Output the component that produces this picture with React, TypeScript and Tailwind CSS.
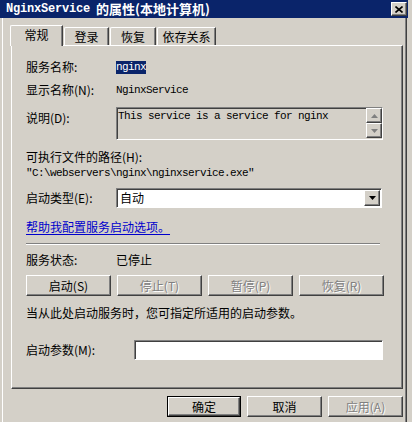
import React from 'react';

const raised =
  'border border-t-white border-l-white border-r-[#404040] border-b-[#404040] shadow-[inset_-1px_-1px_0_#808080]';
const sunken =
  'border border-t-[#808080] border-l-[#808080] border-r-white border-b-white shadow-[inset_1px_1px_0_#404040]';
const mono = "font-['Liberation_Mono',monospace] text-[11px] tracking-[-0.6px]";
const disabled = 'text-[#808080] [text-shadow:1px_1px_0_#fff]';

function Tab({ label, active, width }: { label: string; active?: boolean; width: string }) {
  return (
    <div
      className={`${width} flex items-center justify-center border-t border-l border-t-white border-l-white border-r border-r-[#404040] shadow-[inset_-1px_0_0_#808080] rounded-tl-[2px] bg-[#d4d0c8] ${
        active ? 'h-[21px] -mb-px pb-[2px] relative z-10' : 'h-[18px] ml-px'
      }`}
    >
      {label}
    </div>
  );
}

function Button({ children, off, className = '' }: { children: React.ReactNode; off?: boolean; className?: string }) {
  return (
    <div className={`h-[21px] flex items-center justify-center ${raised} ${off ? disabled : ''} ${className}`}>
      {children}
    </div>
  );
}

function Triangle({ down, color }: { down?: boolean; color: string }) {
  return (
    <svg width="7" height="4" viewBox="0 0 7 4">
      <path d={down ? 'M0 0H7L3.5 4Z' : 'M0 4H7L3.5 0Z'} fill={color} />
    </svg>
  );
}

export default function App() {
  return (
    <div className="w-[412px] h-[422px] bg-[#d4d0c8] overflow-hidden text-[12px] leading-[16px] text-black font-['Noto_Sans_CJK_SC',sans-serif]">
      {/* title bar */}
      <div className="w-[408px] h-[18px] bg-[#0a246a] flex items-center pl-[6px] pr-[1px] text-white font-bold">
        <span className="font-['Liberation_Mono',monospace] text-[12px] tracking-[-0.2px]">NginxService</span>
        <span className="ml-[6px] text-[13px]">的属性(本地计算机)</span>
        <div className={`ml-auto w-[16px] h-[14px] bg-[#d4d0c8] flex items-center justify-center ${raised}`}>
          <svg width="8" height="7" viewBox="0 0 8 7">
            <path d="M0.5 0.5L7.5 6.5M7.5 0.5L0.5 6.5" stroke="#000" strokeWidth="1.6" />
          </svg>
        </div>
      </div>

      {/* window body */}
      <div className="ml-[2px] w-[405px] h-[404px] border-l border-l-white border-r border-r-[#404040] shadow-[inset_-1px_0_0_#808080]">
        <div className="flex items-end h-[27px] pl-[7px]">
          <Tab label="常规" active width="w-[53px]" />
          <Tab label="登录" width="w-[45px]" />
          <Tab label="恢复" width="w-[46px]" />
          <Tab label="依存关系" width="w-[59px]" />
        </div>

        <div className="ml-[8px] w-[392px] h-[344px] border-t border-l border-t-white border-l-white border-r border-b border-r-[#404040] border-b-[#404040] shadow-[inset_-1px_-1px_0_#808080] pl-[14px] flex flex-col">
          <div className="mt-[13px] h-[16px] flex items-center">
            <span className="w-[90px]">服务名称:</span>
            <span className={`${mono} bg-[#0a246a] text-white h-[13px] leading-[13px]`}>nginx</span>
          </div>
          <div className="mt-[7px] h-[16px] flex items-center">
            <span className="w-[90px]">显示名称(N):</span>
            <span className={mono}>NginxService</span>
          </div>
          <div className="mt-[9px] h-[33px] flex items-start">
            <span className="w-[90px] pt-[3px]">说明(D):</span>
            <div className={`w-[267px] h-[33px] flex ${sunken}`}>
              <div className={`flex-1 pl-[1px] pt-[1px] leading-[14px] ${mono}`}>This service is a service for nginx</div>
              <div className="w-[16px] flex flex-col">
                <div className={`h-[15px] flex items-center justify-center ${raised}`}>
                  <Triangle color="#808080" />
                </div>
                <div className={`h-[15px] flex items-center justify-center ${raised}`}>
                  <Triangle down color="#808080" />
                </div>
              </div>
            </div>
          </div>
          <div className="mt-[9px] h-[16px] flex items-center">可执行文件的路径(H):</div>
          <div className={`h-[16px] flex items-center ${mono}`}>"C:\webservers\nginx\nginxservice.exe"</div>
          <div className="mt-[7px] h-[20px] flex items-center">
            <span className="w-[90px]">启动类型(E):</span>
            <div className={`w-[266px] h-[20px] bg-white flex items-center ${sunken}`}>
              <span className="pl-[3px] flex-1">自动</span>
              <div className={`w-[16px] h-[16px] mr-[1px] bg-[#d4d0c8] flex items-center justify-center ${raised}`}>
                <Triangle down color="#000" />
              </div>
            </div>
          </div>
          <div className="mt-[11px] h-[16px] flex items-center">
            <span className="text-[#0000cc] underline underline-offset-2">帮助我配置服务启动选项。</span>
          </div>
          <div className="mt-[8px] w-[354px] h-[2px] border-t border-t-[#808080] border-b border-b-white" />
          <div className="mt-[7px] h-[16px] flex items-center">
            <span className="w-[90px]">服务状态:</span>
            <span>已停止</span>
          </div>
          <div className="mt-[7px] flex gap-[6px]">
            <Button className="w-[85px]">启动(S)</Button>
            <Button off className="w-[85px]">停止(T)</Button>
            <Button off className="w-[85px]">暂停(P)</Button>
            <Button off className="w-[85px]">恢复(R)</Button>
          </div>
          <div className="mt-[9px] h-[16px] flex items-center">当从此处启动服务时，您可指定所适用的启动参数。</div>
          <div className="mt-[19px] h-[20px] flex items-center">
            <span className="w-[108px]">启动参数(M):</span>
            <div className={`w-[249px] h-[20px] bg-white ${sunken}`} />
          </div>
        </div>

        <div className="mt-[7px] flex gap-[6px] pl-[164px]">
          <div className="w-[74px] h-[21px] border border-black">
            <div className={`h-full flex items-center justify-center ${raised}`}>确定</div>
          </div>
          <Button className="w-[75px]">取消</Button>
          <Button off className="w-[75px]">应用(A)</Button>
        </div>
      </div>
    </div>
  );
}
